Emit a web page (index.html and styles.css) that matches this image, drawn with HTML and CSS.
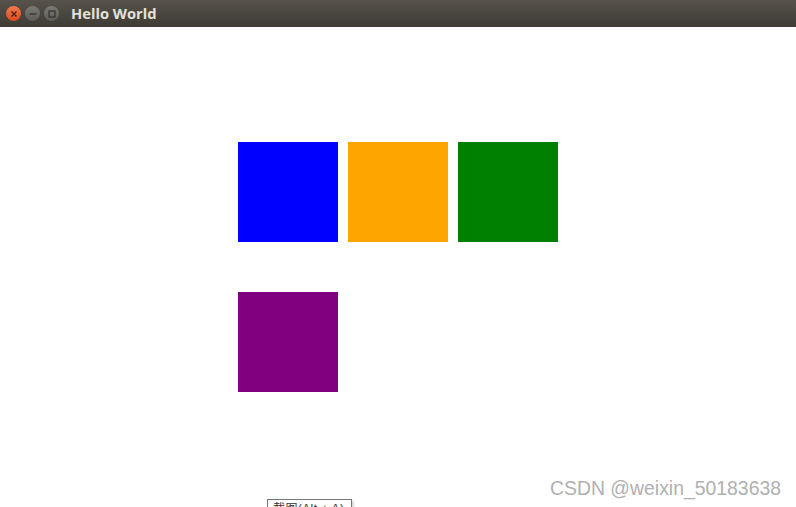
FILE: index.html
```html
<!DOCTYPE html>
<html lang="en">
<head>
    <meta charset="UTF-8">
    <meta name="viewport" content="width=device-width, initial-scale=1.0">
    <title>Hello World</title>
    <link rel="stylesheet" href="styles.css">
</head>
<body>

<div class="titlebar">
    <div class="window-buttons">
        <span class="win-btn close">
            <svg width="8" height="8" viewBox="0 0 8 8"><path d="M1.5 1.5l5 5M6.5 1.5l-5 5" stroke="#4a2015" stroke-width="1.4"/></svg>
        </span>
        <span class="win-btn">
            <svg width="8" height="8" viewBox="0 0 8 8"><path d="M0.5 4h7" stroke="#33322e" stroke-width="1.3"/></svg>
        </span>
        <span class="win-btn">
            <svg width="8" height="8" viewBox="0 0 8 8"><rect x="1" y="1" width="6" height="6" fill="none" stroke="#33322e" stroke-width="1.2"/></svg>
        </span>
    </div>
    <div class="window-title">Hello World</div>
</div>

<div class="stage">
    <div class="squares">
        <div class="square blue"></div>
        <div class="square orange"></div>
        <div class="square green"></div>
        <div class="square purple"></div>
    </div>
</div>

<div class="tooltip">截图(Alt + A)</div>
<div class="watermark">CSDN @weixin_50183638</div>

</body>
</html>
```

FILE: styles.css
```css
html, body {
    margin: 0;
    padding: 0;
    height: 100%;
    overflow: hidden;
    background-color: white;
}

body {
    position: relative;
    font-family: "Liberation Sans", Arial, sans-serif;
}

.titlebar {
    display: flex;
    align-items: center;
    height: 27px;
    padding-left: 6px;
    box-sizing: border-box;
    background: linear-gradient(#57534a, #3d3b35);
}

.window-buttons {
    display: flex;
    gap: 4px;
}

.win-btn {
    display: flex;
    align-items: center;
    justify-content: center;
    width: 15px;
    height: 15px;
    border-radius: 50%;
    background: linear-gradient(#7b7a75, #5c5b56);
}

.win-btn.close {
    background: linear-gradient(#f47a4a, #e0491f);
}

.window-title {
    margin-left: 12px;
    margin-bottom: 2px;
    font-family: "Open Sans", "Noto Sans", sans-serif;
    font-size: 14.7px;
    font-weight: 700;
    color: #e4e1da;
}

.stage {
    padding: 115px 0 0 238px;
}

.squares {
    display: grid;
    grid-template-columns: repeat(3, 100px);
    grid-auto-rows: 100px;
    gap: 50px 10px;
}

.blue {
    background-color: blue;
}

.orange {
    background-color: orange;
}

.green {
    background-color: green;
}

.purple {
    background-color: purple;
}

.tooltip {
    position: absolute;
    left: 267px;
    top: 499px;
    width: 85px;
    height: 20px;
    border: 1px solid #767676;
    background-color: white;
    box-shadow: 2px 2px 2px rgba(0, 0, 0, 0.15);
    font-family: "Liberation Sans", "Noto Sans CJK SC", sans-serif;
    font-size: 12px;
    line-height: 18px;
    letter-spacing: 0.4px;
    padding-left: 5px;
    box-sizing: border-box;
    color: #333;
    white-space: nowrap;
}

.watermark {
    position: absolute;
    right: 15px;
    top: 477px;
    font-size: 19.4px;
    line-height: 23px;
    color: #b0b0b0;
    white-space: nowrap;
}
```
